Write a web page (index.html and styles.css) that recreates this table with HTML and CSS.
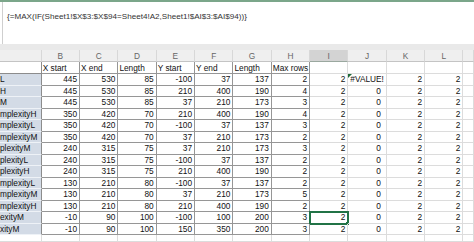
FILE: index.html
```html
<!DOCTYPE html>
<html lang="en">
  <head>
    <meta charset="UTF-8" />
    <meta name="viewport" content="width=device-width, initial-scale=1.0" />
    <title>Sheet4</title>
    <link rel="stylesheet" href="styles.css">
  </head>
  <body>
    <div class="topbar"></div>
    <div class="formula">{=MAX(IF(Sheet1!$X$3:$X$94=Sheet4!A2,Sheet1!$AI$3:$AI$94))}</div>
    <div class="gap"></div>
    <div class="sheet" id="sheet"></div>

    <script>
      // column letters (first and last are the clipped A and M columns)
      const letters = ['', 'B', 'C', 'D', 'E', 'F', 'G', 'H', 'I', 'J', 'K', 'L', ''];
      const titles = ['', 'X start', 'X end', 'Length', 'Y start', 'Y end', 'Length', 'Max rows'];

      const rows = [
        ['L', 445, 530, 85, -100, 37, 137, 2, 2, '#VALUE!', 2, 2],
        ['H', 445, 530, 85, 210, 400, 190, 4, 2, 0, 2, 2],
        ['M', 445, 530, 85, 37, 210, 173, 3, 2, 0, 2, 2],
        ['mplexityH', 350, 420, 70, 210, 400, 190, 4, 2, 0, 2, 2],
        ['mplexityL', 350, 420, 70, -100, 37, 137, 3, 2, 0, 2, 2],
        ['mplexityM', 350, 420, 70, 37, 210, 173, 2, 2, 0, 2, 2],
        ['plexityM', 240, 315, 75, 37, 210, 173, 3, 2, 0, 2, 2],
        ['plexityL', 240, 315, 75, -100, 37, 137, 2, 2, 0, 2, 2],
        ['plexityH', 240, 315, 75, 210, 400, 190, 2, 2, 0, 2, 2],
        ['mplexityL', 130, 210, 80, -100, 37, 137, 2, 2, 0, 2, 2],
        ['mplexityM', 130, 210, 80, 37, 210, 173, 5, 2, 0, 2, 2],
        ['mplexityH', 130, 210, 80, 210, 400, 190, 2, 2, 0, 2, 2],
        ['exityM', -10, 90, 100, -100, 100, 200, 3, 2, 0, 2, 2],
        ['xityM', -10, 90, 100, 150, 350, 200, 3, 2, 0, 2, 2]
      ];

      const sheet = document.getElementById('sheet');

      function cell(cls, text) {
        const d = document.createElement('div');
        d.className = 'cell ' + cls;
        if (text !== undefined && text !== '') d.textContent = text;
        sheet.appendChild(d);
        return d;
      }

      // header row
      letters.forEach((l, c) => cell(c === 8 ? 'hd on' : 'hd', l));

      // titles row
      for (let c = 0; c < 13; c++) {
        if (c === 0) cell('lab first');
        else if (c <= 7) cell('tb txt', titles[c]);
        else cell('gr');
      }

      // data rows
      rows.forEach((r, i) => {
        for (let c = 0; c < 13; c++) {
          if (c === 0) cell('lab', r[0]);
          else if (c <= 7) cell('tb num', r[c]);
          else if (c === 12) cell('gr');
          else {
            let cls = 'gr num';
            if (c === 9) cls = r[c] === '#VALUE!' ? 'gr err' : 'gr num pad';
            if (c === 8 && i === 12) cls += ' sel';
            cell(cls, r[c]);
          }
        }
      });

      // empty row under the table
      for (let c = 0; c < 13; c++) cell('gr');
    </script>
  </body>
</html>
```

FILE: styles.css
```css
body {
    margin: 0;
    width: 474px;
    height: 242px;
    overflow: hidden;
    background-color: #fff;
    font-family: "Liberation Sans", Arial, sans-serif;
    font-size: 8.3px;
    color: #111;
}
.topbar {
    height: 2px;
    background-color: #7ba68a;
}
.formula {
    height: 42px;
    box-sizing: border-box;
    margin-left: 2px;
    border-left: 1px solid #cfcfcf;
    padding: 10px 4px 0;
    color: #333;
    font-size: 8.1px;
    white-space: nowrap;
}
.gap {
    height: 6px;
    background-color: #e9e9e9;
}
.sheet {
    display: grid;
    grid-template-columns: 41.7px repeat(11, 38.35px) 1fr;
    grid-template-rows: 12px 12px repeat(14, 11.5px) 1fr;
    height: 192px;
}
.cell {
    box-sizing: border-box;
    display: flex;
    align-items: center;
    padding: 0 2px;
    overflow: hidden;
    white-space: nowrap;
    position: relative;
}
.hd {
    background-color: #efefef;
    border-right: 1px solid #d8d8d8;
    border-bottom: 1px solid #c4c4c4;
    color: #666;
    justify-content: center;
}
.hd.on {
    background-color: #d3d3d3;
    border-bottom-color: #9aa89f;
}
.lab {
    background-color: #d3dbe6;
    border-right: 1px solid #8c8c8c;
    border-bottom: 1px solid #eef2f7;
    padding-left: 0;
}
.lab.first {
    background-color: #fff;
    border-bottom-color: #8c8c8c;
}
.tb {
    border-right: 1px solid #969696;
    border-bottom: 1px solid #969696;
}
.gr {
    border-right: 1px solid #dcdcdc;
    border-bottom: 1px solid #dcdcdc;
}
.num {
    justify-content: flex-end;
}
.num.pad {
    padding-right: 5px;
}
.txt {
    justify-content: flex-start;
    padding-left: 1px;
}
.err {
    justify-content: center;
}
.err::before {
    content: "";
    position: absolute;
    top: 0;
    left: 0;
    border-top: 4px solid #1f6b3a;
    border-right: 4px solid transparent;
}
.sel {
    outline: 2px solid #217346;
    outline-offset: -1px;
}
.sel::after {
    content: "";
    position: absolute;
    right: -3px;
    bottom: -3px;
    width: 3px;
    height: 3px;
    background-color: #217346;
    border: 1px solid #fff;
}
```
